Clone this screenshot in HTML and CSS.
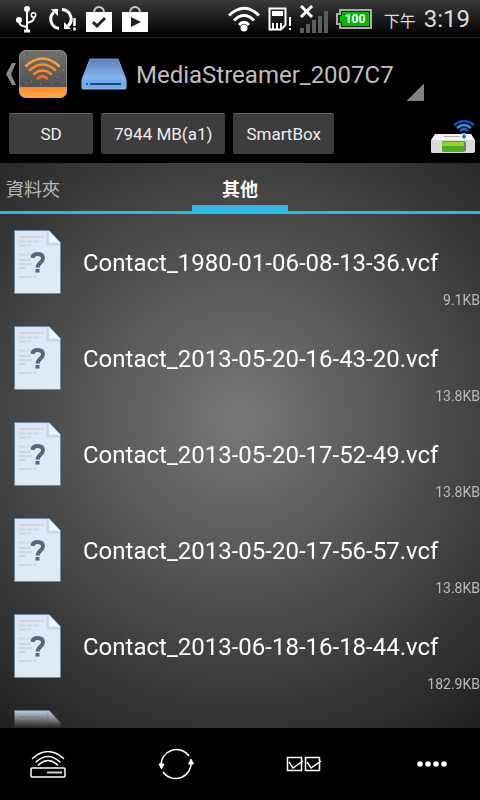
FILE: index.html
```html
<!DOCTYPE html>
<html lang="zh-Hant">
<head>
    <meta charset="UTF-8">
    <meta name="viewport" content="width=device-width, initial-scale=1.0">
    <title>MediaStreamer</title>
    <link rel="stylesheet" href="styles.css">
</head>
<body>
    <!-- shared file icon -->
    <svg class="defs" width="0" height="0" aria-hidden="true">
        <linearGradient id="paper" x1="0" y1="0" x2="1" y2="1">
            <stop offset="0" stop-color="#d9e6f3"/>
            <stop offset="1" stop-color="#e1ebf5"/>
        </linearGradient>
        <symbol id="file" viewBox="0 0 48 64">
            <path d="M.5.5H35L46.500 12.500V63.500H.5z" fill="url(#paper)" stroke="#6f8aa3"/>
            <path d="M34 1v13h12" fill="none" stroke="#c4d9eb" stroke-width="3"/>
            <path d="M35 1v11.500h11z" fill="#f1f5fa"/>
            <path d="M5 7h25M5 11.500h20M5 15.500h11M5 24.500h14M5 30h12M5 34h13M5 38h8M5 47h17" stroke="#ccd6e0" stroke-width="2" stroke-dasharray="7 1 5 1"/>
            <path d="M18.500 28C18.800 24.800 21 24 23.500 24C27 24 29 25.500 29 28.300C29 32.500 23.700 32.500 23.700 37.500" fill="none" stroke="#56697a" stroke-width="4"/>
            <rect x="21.500" y="39" width="4" height="3.500" fill="#56697a"/>
        </symbol>
    </svg>

    <div class="status-bar">
        <div class="status-icons">
            <svg width="22" height="28" viewBox="0 0 22 28" fill="none" stroke="#fff" stroke-width="2">
                <path d="M11 3v23M11 22C4 21 3 19 3 15M11 18c4-1 7-2 7-6"/>
                <path d="M8 26h6" stroke-width="3"/>
                <circle cx="11" cy="4" r="2" fill="#fff"/>
                <circle cx="3" cy="15" r="2" fill="#fff"/>
                <circle cx="17.500" cy="10" r="2.200" stroke-width="1.500"/>
            </svg>
            <svg width="28" height="24" viewBox="0 0 28 24" fill="none" stroke="#fff" stroke-width="3">
                <path d="M11 21.500A9.500 9.500 0 0 1 6 5M14 2.500A9.500 9.500 0 0 1 20 19"/>
                <path d="M3 2h7v7zM23 22h-7v-7z" fill="#fff" stroke="none"/>
                <path d="M26.500 11v8M26.500 20.500v3" stroke-width="2.500"/>
            </svg>
            <svg width="26" height="27" viewBox="0 0 26 27">
                <path d="M8 8C8 0 18 0 18 8" fill="none" stroke="#ccc" stroke-width="2"/>
                <path d="M0 7h26v20H0z" fill="#fff"/>
                <path d="M7 17l4 4 8-8" fill="none" stroke="#222" stroke-width="3"/>
            </svg>
            <svg width="26" height="27" viewBox="0 0 26 27">
                <path d="M8 8C8 0 18 0 18 8" fill="none" stroke="#ccc" stroke-width="2"/>
                <path d="M0 7h26v20H0z" fill="#fff"/>
                <path d="M9 12l10 5-10 5z" fill="#222"/>
            </svg>
        </div>
        <div class="status-icons right">
            <svg width="32" height="26" viewBox="0 0 32 26" fill="none" stroke="#fff" stroke-width="3">
                <path d="M1 9.500Q16-5 31 9.500M6 14.500Q16 4.500 26 14.500M11 19Q16 13.500 21 19"/>
                <circle cx="16" cy="22" r="3.500" fill="#fff" stroke="none"/>
            </svg>
            <svg width="24" height="24" viewBox="0 0 24 24">
                <path d="M1.500 1.500h16V18L13 22.500H1.500z" fill="none" stroke="#fff" stroke-width="2"/>
                <path d="M4 4h11v5H4zM4 16h2v7H4zM8 16h2v7H8zM12 16h2v6h-2zM21 10h2v9h-2zM21 21h2v2h-2z" fill="#fff"/>
            </svg>
            <svg width="28" height="28" viewBox="0 0 28 28">
                <path d="M0 23h4v5H0zM6 19h4v9H6zM12 15h4v13h-4zM18 11h4v17h-4zM24 6h4v22h-4z" fill="#5d5d5d"/>
                <path d="M1 1l11 11M12 1L1 12" stroke="#fff" stroke-width="3"/>
            </svg>
            <svg width="36" height="20" viewBox="0 0 36 20">
                <path d="M4 1h31v18H4v-4H1V5h3z" fill="#222" stroke="#aaa" stroke-width="2"/>
                <path d="M6 3h27v14H6v-4H4V7h2z" fill="#0b0"/>
                <text class="battery-text" x="19" y="14" text-anchor="middle">100</text>
            </svg>
            <span class="ampm">下午</span>
            <span class="clock">3:19</span>
        </div>
    </div>

    <div class="header">
        <button class="home" aria-label="Back">
            <svg width="61" height="48" viewBox="0 0 61 48">
                <defs>
                    <linearGradient id="orange" x1="0" y1="0" x2="0" y2="1">
                        <stop offset="0" stop-color="#ff8a24"/>
                        <stop offset="1" stop-color="#ffac50"/>
                    </linearGradient>
                    <linearGradient id="plate" x1="0" y1="0" x2="0" y2="1">
                        <stop offset="0" stop-color="#707070"/>
                        <stop offset="1" stop-color="#515151"/>
                    </linearGradient>
                    <clipPath id="round"><rect x="13" width="48" height="48" rx="7"/></clipPath>
                </defs>
                <path d="M6 13h4L5 24l5 11H6L0 24z" fill="#888"/>
                <g clip-path="url(#round)">
                    <path d="M13 0h48v38H13z" fill="url(#plate)"/>
                    <path d="M13 37h48v11H13z" fill="url(#orange)"/>
                    <path d="M18 5h1M29 3h1M43 6h1M54 4h1M16 22h1M25 31h1M51 27h1M57 20h1M20 34h1M34 34h1M46 33h1M56 33h1M22 43h1M39 41h1M52 44h1" stroke="#999"/>
                </g>
                <rect x="13.500" y=".5" width="47" height="47" rx="7" fill="none" stroke="#aaa" opacity=".5"/>
                <g fill="none" stroke="#ff8b22" stroke-width="2.500" stroke-linecap="round">
                    <path d="M20 16Q36.500 1 53 16" stroke="#ffa12d"/>
                    <path d="M24 20Q36.500 9 49 20"/>
                    <path d="M28 24Q36.500 17 45 24"/>
                    <path d="M32 28.500Q32.500 26.500 35 27Q36.500 24.500 38 27Q40.500 26.500 41 28.500" stroke="#ff6f1b"/>
                </g>
            </svg>
        </button>
        <svg class="drive" width="46" height="32" viewBox="0 0 46 32" aria-hidden="true">
            <defs>
                <linearGradient id="drive-top" x1="0" y1="0" x2="0" y2="1">
                    <stop offset="0" stop-color="#5d7fbb"/>
                    <stop offset="1" stop-color="#88b8ec"/>
                </linearGradient>
            </defs>
            <path d="M9 1h28l8 20H1z" fill="url(#drive-top)" stroke="#6f9bd5"/>
            <rect x="1" y="21" width="44" height="10" rx="1" fill="#6eaaf0" stroke="#87baf5"/>
            <path d="M9 26h31" stroke="#26435f" stroke-width="2"/>
            <path d="M5 26h2" stroke="#3b689b" stroke-width="2"/>
        </svg>
        <select class="device" aria-label="Device">
            <option>MediaStreamer_2007C7</option>
        </select>
    </div>

    <div class="sources">
        <button class="source source-sd">SD</button>
        <button class="source">7944 MB(a1)</button>
        <button class="source">SmartBox</button>
        <svg class="router" width="46" height="34" viewBox="0 0 46 34" aria-hidden="true">
            <g fill="none" stroke="#1f66c8" stroke-width="2.500">
                <path d="M24 5Q34-3 44 5" stroke="#1b4fb5"/>
                <path d="M27 8Q34 2 41 8" stroke="#2e9be6"/>
                <path d="M30 11Q34 7 38 11"/>
            </g>
            <path d="M32 13h4l-1 3h-2z" fill="#4ca8ef"/>
            <path d="M5 14h36l4 6v12l-2 1H2l-1-1V20z" fill="#d9d9d9"/>
            <path d="M5 14h36l3 6H2z" fill="#f4f4f4"/>
            <path d="M14 16.500h16" stroke="#aaa"/>
            <path d="M34 14.500v4M32 16.500h4" stroke="#1677d2" stroke-width="2"/>
            <rect x="12" y="21" width="23" height="11" rx="1" fill="#4eac28"/>
            <path d="M12 22h22v4H12z" fill="#8fd32b"/>
            <path d="M35 22v9" stroke="#777" stroke-width="2"/>
        </svg>
    </div>

    <div class="content">
        <div class="tabs">
            <button class="tab">資料夾</button>
            <button class="tab active">其他</button>
        </div>
        <ul class="file-list">
            <li class="file">
                <svg class="file-icon"><use href="#file"/></svg>
                <span class="file-name">Contact_1980-01-06-08-13-36.vcf</span>
                <span class="file-size">9.1KB</span>
            </li>
            <li class="file">
                <svg class="file-icon"><use href="#file"/></svg>
                <span class="file-name">Contact_2013-05-20-16-43-20.vcf</span>
                <span class="file-size">13.8KB</span>
            </li>
            <li class="file">
                <svg class="file-icon"><use href="#file"/></svg>
                <span class="file-name">Contact_2013-05-20-17-52-49.vcf</span>
                <span class="file-size">13.8KB</span>
            </li>
            <li class="file">
                <svg class="file-icon"><use href="#file"/></svg>
                <span class="file-name">Contact_2013-05-20-17-56-57.vcf</span>
                <span class="file-size">13.8KB</span>
            </li>
            <li class="file">
                <svg class="file-icon"><use href="#file"/></svg>
                <span class="file-name">Contact_2013-06-18-16-18-44.vcf</span>
                <span class="file-size">182.9KB</span>
            </li>
            <li class="file">
                <svg class="file-icon"><use href="#file"/></svg>
            </li>
        </ul>
    </div>

    <div class="toolbar">
        <button class="tool" aria-label="Devices">
            <svg width="36" height="28" viewBox="0 0 36 28" fill="none" stroke="#fff" stroke-width="1.500">
                <path d="M2.500 8.500Q18-5.500 33.500 8.500M6 12Q18 1 30 12M8.500 15Q18 6 27.500 15" stroke-linecap="round"/>
                <rect x="1" y="18" width="34" height="9" rx="1"/>
                <path d="M17 22.500h15" stroke="#ccc" stroke-width="2"/>
            </svg>
        </button>
        <button class="tool" aria-label="Refresh">
            <svg width="36" height="34" viewBox="0 0 36 34" fill="none" stroke="#fff" stroke-width="1.500">
                <path d="M31 9A15.500 15.500 0 0 0 3 19M5 25A15.500 15.500 0 0 0 33 14"/>
                <path d="M1 17h5l-2.500 5zM30.500 17h5L33 12z" fill="#fff" stroke-width="1"/>
            </svg>
        </button>
        <button class="tool" aria-label="Select all">
            <svg width="36" height="16" viewBox="0 0 36 16" fill="none" stroke="#fff" stroke-width="1.500">
                <path d="M1.500 1.500h14v13h-14zM19.500 1.500h14v13h-14z"/>
                <path d="M3 6l4 6 10-7M21 6l4 6 10-7"/>
            </svg>
        </button>
        <button class="tool more" aria-label="More">
            <svg width="30" height="6" viewBox="0 0 30 6" fill="#fff">
                <circle cx="3" cy="3" r="2.800"/>
                <circle cx="11" cy="3" r="2.800"/>
                <circle cx="19" cy="3" r="2.800"/>
                <circle cx="27" cy="3" r="2.800"/>
            </svg>
        </button>
    </div>
</body>
</html>
```
FILE: styles.css
```css
* {
    box-sizing: border-box;
}
body {
    display: flex;
    flex-direction: column;
    height: 100vh;
    margin: 0;
    overflow: hidden;
    background-color: black;
    color: white;
    font-family: Roboto, "Noto Sans CJK TC", sans-serif;
}
button, select {
    margin: 0;
    padding: 0;
    border: none;
    background: none;
    color: inherit;
    font-family: inherit;
    cursor: pointer;
}
svg {
    display: block;
    flex: none;
}
.defs {
    position: absolute;
}

/* Status bar */
.status-bar {
    display: flex;
    justify-content: space-between;
    flex: none;
    height: 38px;
    padding: 0 10px 0 16px;
    border-bottom: 1px solid #222;
    background: linear-gradient(#3a3a3a, #000);
}
.status-icons {
    display: flex;
    align-items: center;
    gap: 10px;
}
.status-icons.right {
    gap: 8px;
}
.battery-text {
    fill: #fff;
    font-size: 12px;
    font-weight: bold;
}
.ampm {
    padding: 2px 0 0 4px;
    color: #ddd;
    font-size: 16px;
}
.clock {
    color: #ddd;
    font-size: 24px;
}

/* Title row */
.header {
    display: flex;
    align-items: center;
    flex: none;
    height: 72px;
    padding-left: 6px;
}
.drive {
    margin: 0 9px 0 14px;
}
.device {
    width: 288px;
    height: 54px;
    padding-top: 2px;
    appearance: none;
    background: linear-gradient(135deg, transparent 50%, #808080 50%) no-repeat right bottom / 18px 18px;
    color: #bebebe;
    font-size: 24px;
}

/* Storage buttons */
.sources {
    display: flex;
    align-items: center;
    flex: none;
    gap: 8px;
    height: 53px;
    padding: 3px 4px 9px 9px;
}
.source {
    height: 41px;
    padding: 0 13px;
    border-top: 1px solid #666;
    border-radius: 2px;
    background-color: #3d3d3d;
    color: #eee;
    font-size: 17px;
}
.source-sd {
    width: 84px;
}
.router {
    align-self: flex-end;
    margin-left: auto;
}

/* Tabs and list */
.content {
    display: flex;
    flex: 1;
    flex-direction: column;
    min-height: 0;
    background: radial-gradient(circle 400px at 50% 256px, #787878, #1e1e1e);
}
.tabs {
    display: grid;
    grid-template-columns: 1fr 96px 1fr;
    flex: none;
    height: 51px;
    border-bottom: 3px solid #33b5e5;
}
.tab {
    padding: 2px 0 0 6px;
    color: #bbb;
    font-size: 18px;
    text-align: left;
}
.tab.active {
    padding: 8px 0 0;
    border-bottom: 6px solid #33b5e5;
    color: #fff;
    font-weight: bold;
    text-align: center;
}
.file-list {
    flex: 1;
    min-height: 0;
    margin: 0;
    padding: 0;
    overflow: hidden;
    list-style: none;
    -webkit-mask-image: linear-gradient(to top, transparent, black 20px);
    mask-image: linear-gradient(to top, transparent, black 20px);
}
.file {
    display: grid;
    grid-template-columns: 48px 1fr;
    grid-template-rows: 20px 56px 20px;
    align-items: center;
    column-gap: 21px;
    padding-left: 14px;
}
.file-icon {
    grid-area: 1 / 1 / 4 / 2;
    width: 48px;
    height: 64px;
}
.file-name {
    grid-area: 1 / 2 / 4 / 3;
    padding-top: 2px;
    font-size: 24px;
}
.file-size {
    grid-area: 3 / 2;
    color: #bbb;
    font-size: 14px;
    line-height: 20px;
    text-align: right;
}

/* Bottom toolbar */
.toolbar {
    display: flex;
    justify-content: space-between;
    flex: none;
    height: 72px;
}
.tool {
    display: flex;
    align-items: center;
    justify-content: center;
    width: 96px;
}
```
